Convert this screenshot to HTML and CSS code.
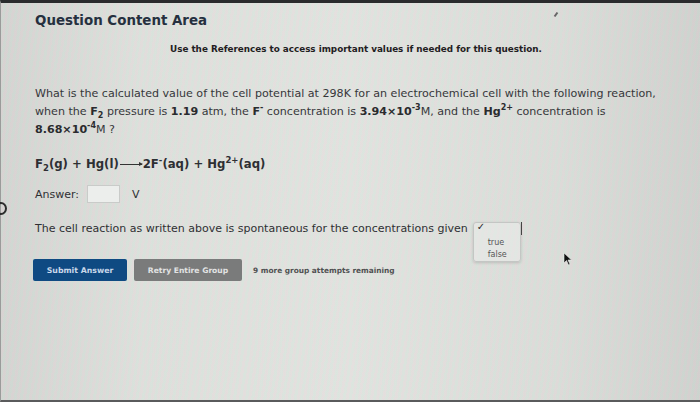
FILE: index.html
```html
<!DOCTYPE html>
<html>
<head>
<meta charset="utf-8">
<link rel="stylesheet" href="styles.css">
</head>
<body>
<div class="screen">
  <div class="content">
    <h1 class="title">Question Content Area</h1>
    <p class="refs">Use the References to access important values if needed for this question.</p>
    <p class="question">What is the calculated value of the cell potential at 298K for an electrochemical cell with the following reaction, when the <b>F<sub>2</sub></b> pressure is <b>1.19</b> atm, the <b>F<sup>-</sup></b> concentration is <span class="nw"><b>3.94×10<sup>-3</sup></b>M</span>, and the <b>Hg<sup>2+</sup></b> concentration is <span class="nw"><b>8.68×10<sup>-4</sup></b>M ?</span></p>
    <p class="reaction">F<sub>2</sub>(g) + Hg(l)<span class="arrow"></span>2F<sup>-</sup>(aq) + Hg<sup>2+</sup>(aq)</p>
    <div class="answer">
      <span>Answer:</span>
      <span class="input"></span>
      <span class="unit">V</span>
    </div>
    <div class="spont">
      <span>The cell reaction as written above is spontaneous for the concentrations given</span>
      <span class="select">
        <span class="menu">
          <span class="opt">true</span>
          <span class="opt">false</span>
        </span>
        <span class="check">✓</span>
      </span>
    </div>
    <div class="actions">
      <span class="btn btn-primary">Submit Answer</span>
      <span class="btn btn-grey">Retry Entire Group</span>
      <span class="remaining">9 more group attempts remaining</span>
    </div>
  </div>
  <span class="ring"></span>
  <svg class="cursor" width="10" height="14" viewBox="0 0 10 14"><path d="M1 1 L1 11 L3.5 8.5 L5.5 13 L7 12.3 L5 8 L8.5 8 Z" fill="#111" stroke="#eee" stroke-width="0.6"/></svg>
  <span class="pen"></span>
</div>
</body>
</html>
```

FILE: styles.css
```css
html, body {
  margin: 0;
  padding: 0;
}
body {
  width: 700px;
  height: 402px;
  overflow: hidden;
  font-family: "DejaVu Sans", Verdana, sans-serif;
  color: #2f3033;
}
.screen {
  position: relative;
  width: 700px;
  height: 402px;
  box-sizing: border-box;
  border-top: 3px solid #2a2b2d;
  border-bottom: 2px solid #5a5b5c;
  border-left: 1px solid #9a9b9a;
  background:
    repeating-linear-gradient(100deg, rgba(230,200,205,0.2) 0 3px, rgba(190,225,205,0.2) 3px 6px),
    linear-gradient(90deg, #d4d5d3 0%, #e0e2df 20%, #e4e6e3 50%, #dcdedb 80%, #d0d1cf 100%);
}
.content {
  padding: 9px 0 0 34px;
}
.title {
  margin: 0;
  font-size: 13.4px;
  font-weight: bold;
  color: #25303f;
  line-height: 18px;
}
.refs {
  margin: 12px 0 0 135px;
  font-size: 8.8px;
  font-weight: bold;
  color: #1f2022;
  line-height: 14px;
}
.question {
  margin: 29px 0 0 0;
  width: 632px;
  font-size: 11.1px;
  line-height: 18px;
  color: #36373a;
}
.nw { white-space: nowrap; }
.question b { color: #2a2b2e; }
sub, sup {
  font-size: 8px;
  line-height: 0;
}
.reaction {
  margin: 16px 0 0 0;
  font-size: 11.7px;
  font-weight: bold;
  line-height: 18px;
  color: #2e2f33;
}
.reaction sub, .reaction sup { font-size: 8.5px; }
.arrow {
  display: inline-block;
  position: relative;
  width: 22px;
  height: 1px;
  background: #333;
  vertical-align: middle;
  margin: 0 1px 0 1px;
}
.arrow::after {
  content: "";
  position: absolute;
  right: -1px;
  top: -2px;
  border-left: 4px solid #333;
  border-top: 2.5px solid transparent;
  border-bottom: 2.5px solid transparent;
}
.answer {
  display: flex;
  align-items: center;
  margin-top: 12px;
  font-size: 11px;
  height: 18px;
}
.input {
  width: 31px;
  height: 16px;
  margin-left: 8px;
  border: 1px solid #c9cbc9;
  background: #eceeec;
}
.unit { margin-left: 12px; }
.spont {
  display: flex;
  align-items: center;
  margin-top: 16px;
  font-size: 11px;
  height: 18px;
}
.select {
  position: relative;
  width: 50px;
  height: 16px;
  margin-left: 4px;
}
.check {
  position: absolute;
  left: 5px;
  top: 1px;
  font-size: 10px;
  font-weight: bold;
  color: #2a2a2a;
}
.select::after {
  content: "";
  position: absolute;
  right: 0;
  top: 2px;
  width: 1px;
  height: 13px;
  background: #444;
}
.menu {
  position: absolute;
  left: 1px;
  top: 2px;
  width: 48px;
  height: 40px;
  border: 1px solid #c4c6c4;
  border-radius: 3px;
  background: rgba(236,238,236,0.5);
  box-shadow: 0 1px 3px rgba(0,0,0,0.15);
  display: flex;
  flex-direction: column;
  padding: 14px 0 0 14px;
  box-sizing: border-box;
}
.opt {
  font-size: 8px;
  line-height: 12px;
  color: #555;
}
.actions {
  display: flex;
  align-items: center;
  margin-top: 22px;
  margin-left: -2px;
}
.btn {
  height: 22px;
  display: flex;
  align-items: center;
  justify-content: center;
  font-size: 7.8px;
  font-weight: bold;
  border-radius: 2px;
}
.btn-primary {
  width: 94px;
  background: #0f4a82;
  color: #c9d8ea;
}
.btn-grey {
  width: 108px;
  margin-left: 7px;
  font-size: 7.6px;
  background: #7a7b7b;
  color: #e2e3e3;
}
.remaining {
  margin-left: 11px;
  font-size: 7.4px;
  font-weight: bold;
  color: #505152;
}
.ring {
  position: absolute;
  left: -6px;
  top: 199px;
  width: 8px;
  height: 9px;
  border: 2px solid #2c2c2c;
  border-radius: 50%;
}
.cursor {
  position: absolute;
  left: 562px;
  top: 249px;
}
.pen {
  position: absolute;
  left: 554px;
  top: 9px;
  width: 2px;
  height: 5px;
  background: #666;
  transform: rotate(35deg);
}
```
